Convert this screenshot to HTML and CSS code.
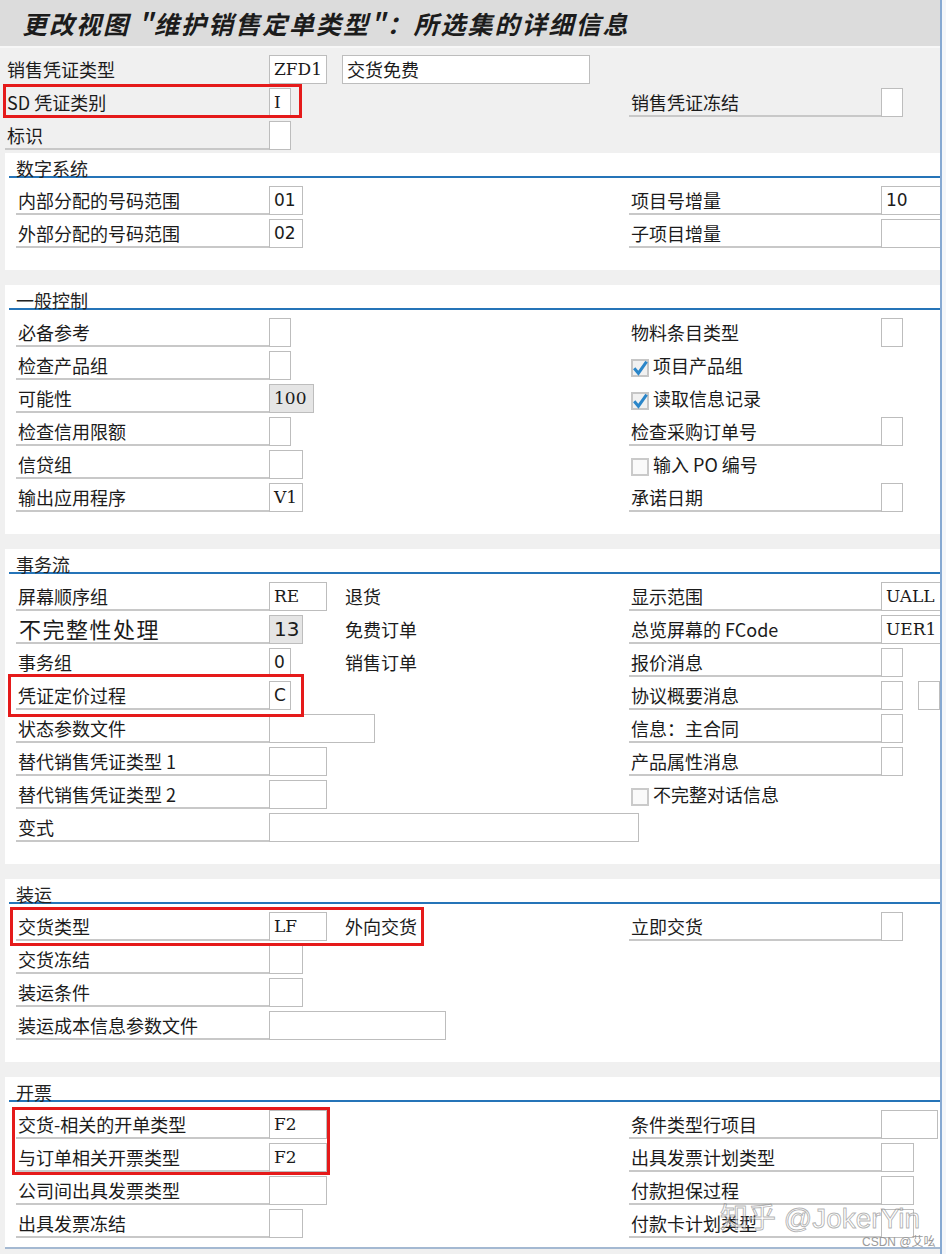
FILE: index.html
```html
<!DOCTYPE html>
<html lang="zh-CN">
<head>
<meta charset="utf-8">
<title>更改视图</title>
<link rel="stylesheet" href="styles.css">
</head>
<body>
<div class="frame">
  <div class="titlebar"><h1>更改视图 "维护销售定单类型"：所选集的详细信息</h1></div>

  <div class="head">
    <div class="cols">
      <div class="col left">
        <div class="row"><span class="lbl">销售凭证类型</span><span class="box w58 ser">ZFD1</span><span class="box w248 txt gap15">交货免费</span></div>
        <div class="row"><span class="lbl u">SD 凭证类别</span><span class="box w22 ser">I</span><span class="mark m-sd"></span></div>
        <div class="row"><span class="lbl u">标识</span><span class="box w22"></span></div>
      </div>
      <div class="col right">
        <div class="row"></div>
        <div class="row"><span class="lbl u">销售凭证冻结</span><span class="box w22"></span></div>
      </div>
    </div>
  </div>

  <section class="group">
    <div class="gtitle">数字系统</div>
    <div class="gline"></div>
    <div class="cols">
      <div class="col left">
        <div class="row"><span class="lbl u">内部分配的号码范围</span><span class="box w34 san">01</span></div>
        <div class="row"><span class="lbl u">外部分配的号码范围</span><span class="box w34 san">02</span></div>
      </div>
      <div class="col right">
        <div class="row"><span class="lbl u">项目号增量</span><span class="box w70 san">10</span></div>
        <div class="row"><span class="lbl u">子项目增量</span><span class="box w70"></span></div>
      </div>
    </div>
  </section>

  <section class="group">
    <div class="gtitle">一般控制</div>
    <div class="gline"></div>
    <div class="cols">
      <div class="col left">
        <div class="row"><span class="lbl u">必备参考</span><span class="box w22"></span></div>
        <div class="row"><span class="lbl u">检查产品组</span><span class="box w22"></span></div>
        <div class="row"><span class="lbl u">可能性</span><span class="box w45 ser ro">100</span></div>
        <div class="row"><span class="lbl u">检查信用限额</span><span class="box w22"></span></div>
        <div class="row"><span class="lbl u">信贷组</span><span class="box w34"></span></div>
        <div class="row"><span class="lbl u">输出应用程序</span><span class="box w34 ser">V1</span></div>
      </div>
      <div class="col right">
        <div class="row"><span class="lbl">物料条目类型</span><span class="box w22"></span></div>
        <div class="row"><svg class="cb" viewBox="0 0 18 18" width="18" height="18"><rect x="1" y="1" width="16" height="16" fill="#f1f1f1" stroke="#c6c6c6" stroke-width="2"/><path d="M3.2 9.2 L7.4 14.2 L15.6 2.6" fill="none" stroke="#2b86c9" stroke-width="3"/></svg><span class="cbl">项目产品组</span></div>
        <div class="row"><svg class="cb" viewBox="0 0 18 18" width="18" height="18"><rect x="1" y="1" width="16" height="16" fill="#f1f1f1" stroke="#c6c6c6" stroke-width="2"/><path d="M3.2 9.2 L7.4 14.2 L15.6 2.6" fill="none" stroke="#2b86c9" stroke-width="3"/></svg><span class="cbl">读取信息记录</span></div>
        <div class="row"><span class="lbl u">检查采购订单号</span><span class="box w22"></span></div>
        <div class="row"><svg class="cb" viewBox="0 0 18 18" width="18" height="18"><rect x="1" y="1" width="16" height="16" fill="#fafafa" stroke="#cacaca" stroke-width="2"/></svg><span class="cbl">输入 PO 编号</span></div>
        <div class="row"><span class="lbl u">承诺日期</span><span class="box w22"></span></div>
      </div>
    </div>
  </section>

  <section class="group">
    <div class="gtitle">事务流</div>
    <div class="gline"></div>
    <div class="cols">
      <div class="col left">
        <div class="row"><span class="lbl u">屏幕顺序组</span><span class="slot"><span class="box w58 ser">RE</span></span><span class="desc">退货</span></div>
        <div class="row"><span class="lbl u big">不完整性处理</span><span class="slot"><span class="box w34 san ro bigv">13</span></span><span class="desc">免费订单</span></div>
        <div class="row"><span class="lbl u">事务组</span><span class="slot"><span class="box w22 san">0</span></span><span class="desc">销售订单</span></div>
        <div class="row"><span class="lbl u">凭证定价过程</span><span class="box w22 san">C</span><span class="mark m-pr"></span></div>
        <div class="row"><span class="lbl u">状态参数文件</span><span class="box w106"></span></div>
        <div class="row"><span class="lbl u">替代销售凭证类型 1</span><span class="box w58"></span></div>
        <div class="row"><span class="lbl u">替代销售凭证类型 2</span><span class="box w58"></span></div>
        <div class="row"><span class="lbl u">变式</span><span class="box w370"></span></div>
      </div>
      <div class="col right">
        <div class="row"><span class="lbl u">显示范围</span><span class="box w70 ser">UALL</span></div>
        <div class="row"><span class="lbl u">总览屏幕的 FCode</span><span class="box w70 ser">UER1</span></div>
        <div class="row"><span class="lbl u">报价消息</span><span class="box w22"></span></div>
        <div class="row"><span class="lbl u">协议概要消息</span><span class="box w22"></span><span class="box w22 gap15"></span></div>
        <div class="row"><span class="lbl u">信息：主合同</span><span class="box w22"></span></div>
        <div class="row"><span class="lbl u">产品属性消息</span><span class="box w22"></span></div>
        <div class="row"><svg class="cb" viewBox="0 0 18 18" width="18" height="18"><rect x="1" y="1" width="16" height="16" fill="#fafafa" stroke="#cacaca" stroke-width="2"/></svg><span class="cbl">不完整对话信息</span></div>
      </div>
    </div>
  </section>

  <section class="group">
    <div class="gtitle">装运</div>
    <div class="gline"></div>
    <div class="cols">
      <div class="col left">
        <div class="row"><span class="lbl u">交货类型</span><span class="slot"><span class="box w58 ser">LF</span></span><span class="desc">外向交货</span><span class="mark m-lf"></span></div>
        <div class="row"><span class="lbl u">交货冻结</span><span class="box w34"></span></div>
        <div class="row"><span class="lbl u">装运条件</span><span class="box w34"></span></div>
        <div class="row"><span class="lbl u">装运成本信息参数文件</span><span class="box w177"></span></div>
      </div>
      <div class="col right">
        <div class="row"><span class="lbl u">立即交货</span><span class="box w22"></span></div>
      </div>
    </div>
  </section>

  <section class="group last">
    <div class="gtitle">开票</div>
    <div class="gline"></div>
    <div class="cols">
      <div class="col left">
        <div class="row"><span class="lbl u">交货-相关的开单类型</span><span class="box w58 ser">F2</span><span class="mark m-bill"></span></div>
        <div class="row"><span class="lbl u">与订单相关开票类型</span><span class="box w58 ser">F2</span></div>
        <div class="row"><span class="lbl u">公司间出具发票类型</span><span class="box w58"></span></div>
        <div class="row"><span class="lbl u">出具发票冻结</span><span class="box w34"></span></div>
      </div>
      <div class="col right">
        <div class="row"><span class="lbl u">条件类型行项目</span><span class="box w57"></span></div>
        <div class="row"><span class="lbl u">出具发票计划类型</span><span class="box w33"></span></div>
        <div class="row"><span class="lbl u">付款担保过程</span><span class="box w33"></span></div>
        <div class="row"><span class="lbl u">付款卡计划类型</span><span class="box w33"></span></div>
      </div>
    </div>
  </section>

  <div class="wm">知乎 @JokerYin</div>
  <div class="wm2">CSDN @艾吆</div>
</div>
</body>
</html>
```

FILE: styles.css
```css
* { box-sizing: border-box; margin: 0; padding: 0; }

body {
  width: 946px;
  height: 1254px;
  overflow: hidden;
  background: #f4f6f9;
  font-family: "Noto Sans CJK SC", "Noto Sans", sans-serif;
  color: #1b1b1b;
}

.frame {
  position: relative;
  width: 942px;
  height: 1254px;
  overflow: hidden;
  background: #f0f0f0;
  border-right: 2px solid #86a9d2;
}

.titlebar {
  height: 48px;
  background: #dcdcdc;
  border-bottom: 2px solid #f7f7f7;
  padding-left: 22px;
  display: flex;
  align-items: center;
}

.titlebar h1 {
  font-size: 25px;
  font-weight: 700;
  font-style: italic;
  letter-spacing: 2px;
  color: #1c1c1c;
  line-height: 1;
  white-space: nowrap;
}

.head {
  height: 105px;
  padding: 7px 0 0 5px;
}

.cols {
  display: grid;
  grid-template-columns: 613px 1fr;
}

.head .cols { grid-template-columns: 624px 1fr; }

.group .cols {
  padding: 8px 0 0 11px;
}

.row {
  position: relative;
  height: 33px;
  display: flex;
  align-items: flex-start;
}

.lbl {
  flex: none;
  height: 29px;
  line-height: 29px;
  font-size: 18px;
  padding-left: 2px;
  white-space: nowrap;
}

.head .left .lbl { width: 264px; }
.group .left .lbl { width: 253px; }
.right .lbl { width: 252px; }

.lbl.u { border-bottom: 2px solid #c8c8c8; }

.lbl.big {
  font-size: 22px;
  letter-spacing: 1.5px;
  line-height: 26px;
  padding-left: 3px;
}

.box {
  flex: none;
  height: 29px;
  background: #fff;
  border: 1px solid #bdbdbd;
  padding-left: 4px;
  line-height: 27px;
  white-space: nowrap;
  overflow: hidden;
}

.box.ro { background: #e5e5e5; }

.ser { font-family: "DejaVu Serif", "Liberation Serif", serif; font-size: 17px; }
.san { font-family: "DejaVu Sans", "Noto Sans", sans-serif; font-size: 17px; }
.txt { font-size: 18px; }
.bigv { font-size: 20px; }

.gap15 { margin-left: 15px; }

.w22 { width: 22px; }
.w33 { width: 33px; }
.w34 { width: 34px; }
.w45 { width: 45px; }
.w57 { width: 57px; }
.w58 { width: 58px; }
.w70 { width: 70px; }
.w106 { width: 106px; }
.w177 { width: 177px; }
.w248 { width: 248px; }
.w370 { width: 370px; }

.slot { flex: none; width: 76px; display: flex; }

.desc {
  font-size: 18px;
  line-height: 29px;
  white-space: nowrap;
}

.cb {
  flex: none;
  margin: 8px 0 0 2px;
  display: block;
}

.cbl {
  font-size: 18px;
  line-height: 29px;
  margin-left: 4px;
  white-space: nowrap;
}

.group {
  margin: 0 0 15px 5px;
  background: #fff;
  padding-bottom: 18px;
}

.group.last {
  height: 172px;
  padding-bottom: 0;
  margin-bottom: 0;
  border-bottom: 2px solid #a4b9d2;
}

.gtitle {
  height: 23px;
  padding-left: 11px;
  font-size: 18px;
  line-height: 30px;
  color: #222;
}

.gline {
  height: 2px;
  margin-left: 4px;
  background: #2574b8;
}

/* red annotation frames */
.mark {
  position: absolute;
  z-index: 5;
  border: 3px solid #e51a1a;
  pointer-events: none;
}
.m-sd { left: -2px; top: -4px; width: 299px; height: 34px; }
.m-pr { left: -8px; top: -7px; width: 296px; height: 43px; }
.m-lf { left: -6px; top: -5px; width: 414px; height: 39px; }
.m-bill { left: -4px; top: -3px; width: 318px; height: 68px; }

/* watermarks */
.wm {
  position: absolute;
  z-index: 6;
  left: 720px;
  top: 1196px;
  font-family: "Liberation Sans", "Noto Sans CJK SC", sans-serif;
  font-size: 28px;
  color: rgba(255, 255, 255, 0.55);
  -webkit-text-stroke: 1px rgba(90, 90, 90, 0.45);
  white-space: nowrap;
}

.wm2 {
  position: absolute;
  z-index: 6;
  left: 862px;
  top: 1232px;
  font-family: "Liberation Sans", "Noto Sans CJK SC", sans-serif;
  font-size: 12px;
  color: #9a9a9a;
  white-space: nowrap;
}
```
